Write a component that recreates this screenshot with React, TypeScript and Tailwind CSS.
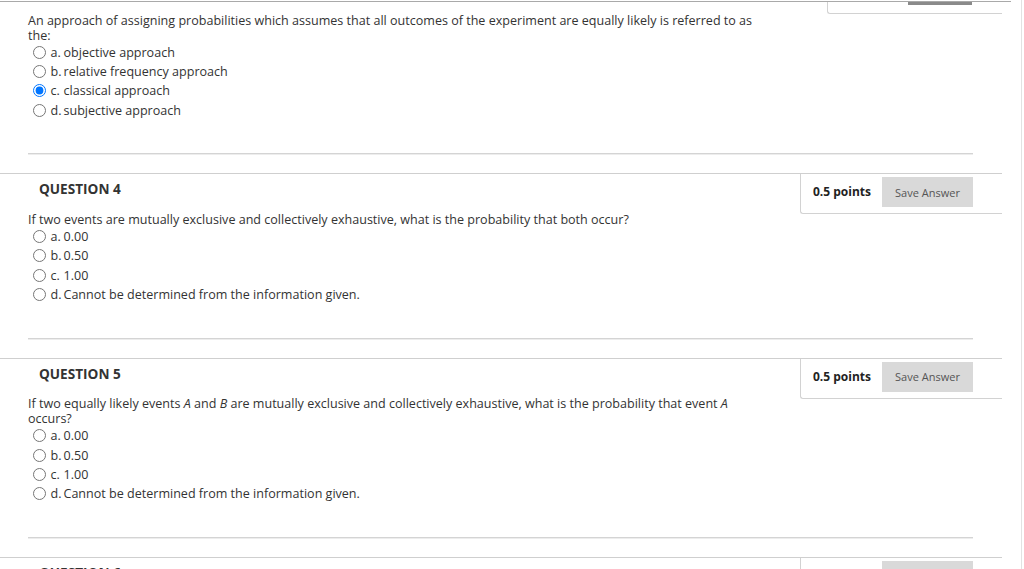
import React from "react";

type Option = { label: string; text: React.ReactNode; checked?: boolean };

function Options({ name, items }: { name: string; items: Option[] }) {
  return (
    <div className="flex flex-col">
      {items.map((o) => (
        <label key={o.label} className="flex h-[19.33px] items-center">
          <input
            type="radio"
            name={name}
            defaultChecked={o.checked}
            className="m-0 ml-[5px] h-[13px] w-[13px] shrink-0"
          />
          <span className="ml-[4.5px] inline-block w-[13px] shrink-0">{o.label}</span>
          <span>{o.text}</span>
        </label>
      ))}
    </div>
  );
}

function Separator() {
  return <div className="mx-[28px] w-[945px] border-t border-b border-t-[#d4d4d4] border-b-[#ededed]" />;
}

function QuestionHeader({ n }: { n: number }) {
  return (
    <div className="flex w-[1002px] border-t border-[#cfcfcf]">
      <div className="flex-1 pl-[39px] pt-[7px]">
        <h2 className="text-[13.6px] font-bold leading-4 text-[#333]">QUESTION {n}</h2>
      </div>
      <div className="flex h-[40px] w-[202px] items-start justify-between rounded-bl-[3px] border-b border-l border-[#d2d2d2] pl-[12px] pr-[29px] pt-[3px]">
        <span className="mt-[7px] text-[12px] font-bold leading-4 text-[#222]">0.5 points</span>
        <button className="h-[30px] w-[91px] bg-[#d9d9d9] text-[11px] text-[#555]">Save Answer</button>
      </div>
    </div>
  );
}

const mcOptions: Option[] = [
  { label: "a.", text: "0.00" },
  { label: "b.", text: "0.50" },
  { label: "c.", text: "1.00" },
  { label: "d.", text: "Cannot be determined from the information given." },
];

export default function App() {
  return (
    <div
      className="flex h-screen overflow-hidden bg-white text-[12.55px] leading-[15px] text-[#333]"
      style={{ fontFamily: "'Open Sans', 'Liberation Sans', sans-serif" }}
    >
      <div className="flex w-[1021px] shrink-0 flex-col">
        {/* bottom of the previous bar */}
        <div className="mt-px h-px w-[1011px] shrink-0 bg-[#a9a9a9]" />
        <div className="flex h-[10.5px] w-[1002px] shrink-0 items-start">
          <div className="flex-1" />
          <div className="h-[12px] w-[175px] shrink-0 rounded-bl-[3px] border-b border-l border-[#d2d2d2]">
            <div className="ml-[80px] h-[3px] w-[64px] bg-[#8a8a8a]" />
          </div>
        </div>

        {/* Question 3 (scrolled) */}
        <div className="w-[800px] shrink-0 px-[28px]">
          <p className="max-w-[740px]">
            An approach of assigning probabilities which assumes that all outcomes of the experiment are equally likely is referred to as the:
          </p>
          <Options
            name="q3"
            items={[
              { label: "a.", text: "objective approach" },
              { label: "b.", text: "relative frequency approach" },
              { label: "c.", text: "classical approach", checked: true },
              { label: "d.", text: "subjective approach" },
            ]}
          />
        </div>
        <div className="mt-[33.5px] shrink-0">
          <Separator />
        </div>

        {/* Question 4 */}
        <div className="mt-[18px] shrink-0">
          <QuestionHeader n={4} />
          <div className="-mt-[2.5px] w-[800px] px-[28px]">
            <p className="max-w-[740px]">
              If two events are mutually exclusive and collectively exhaustive, what is the probability that both occur?
            </p>
            <Options name="q4" items={mcOptions} />
          </div>
          <div className="mt-[33.5px]">
            <Separator />
          </div>
        </div>

        {/* Question 5 */}
        <div className="mt-[18px] shrink-0">
          <QuestionHeader n={5} />
          <div className="-mt-[2.5px] w-[800px] px-[28px]">
            <p className="max-w-[740px]">
              If two equally likely events <i>A</i> and <i>B</i> are mutually exclusive and collectively exhaustive, what is the probability that event <i>A</i> occurs?
            </p>
            <Options name="q5" items={mcOptions} />
          </div>
          <div className="mt-[33.5px]">
            <Separator />
          </div>
        </div>

        {/* Question 6 (cut off) */}
        <div className="mt-[18px] shrink-0">
          <QuestionHeader n={6} />
        </div>
      </div>
      <div className="w-[3px] shrink-0 border-l border-[#e2e2e2]" />
    </div>
  );
}
